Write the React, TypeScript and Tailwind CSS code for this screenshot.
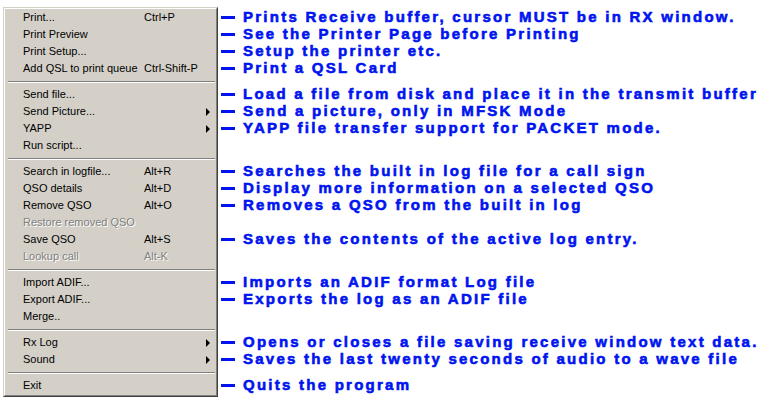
type Item = {
  label: string;
  shortcut?: string;
  arrow?: boolean;
  disabled?: boolean;
  note?: string;
};

const groups: Item[][] = [
  [
    { label: "Print...", shortcut: "Ctrl+P", note: "Prints Receive buffer, cursor MUST be in RX window." },
    { label: "Print Preview", note: "See the Printer Page before Printing" },
    { label: "Print Setup...", note: "Setup the printer etc." },
    { label: "Add QSL to print queue", shortcut: "Ctrl-Shift-P", note: "Print a QSL Card" },
  ],
  [
    { label: "Send file...", note: "Load a file from disk and place it in the transmit buffer" },
    { label: "Send Picture...", arrow: true, note: "Send a picture, only in MFSK Mode" },
    { label: "YAPP", arrow: true, note: "YAPP file transfer support for PACKET mode." },
    { label: "Run script..." },
  ],
  [
    { label: "Search in logfile...", shortcut: "Alt+R", note: "Searches the built in log file for a call sign" },
    { label: "QSO details", shortcut: "Alt+D", note: "Display more information on a selected QSO" },
    { label: "Remove QSO", shortcut: "Alt+O", note: "Removes a QSO from the built in log" },
    { label: "Restore removed QSO", disabled: true },
    { label: "Save QSO", shortcut: "Alt+S", note: "Saves the contents of the active log entry." },
    { label: "Lookup call", shortcut: "Alt-K", disabled: true },
  ],
  [
    { label: "Import ADIF...", note: "Imports an ADIF format Log file" },
    { label: "Export ADIF...", note: "Exports the log as an ADIF file" },
    { label: "Merge.." },
  ],
  [
    { label: "Rx Log", arrow: true, note: "Opens or closes a file saving receive window text data." },
    { label: "Sound", arrow: true, note: "Saves the last twenty seconds of audio to a wave file" },
  ],
  [{ label: "Exit", note: "Quits the program" }],
];

const Separator = () => (
  <div className="h-[9px] flex flex-col justify-center pl-[3px] pr-[1px]">
    <div className="h-px bg-[#808080]" />
    <div className="h-px bg-white" />
  </div>
);

const MenuRow = ({ item }: { item: Item }) => {
  const text = item.disabled
    ? "text-[#808080] [text-shadow:1px_1px_0_#ffffff]"
    : "text-black";
  return (
    <div className={`h-[17px] flex items-center pl-[18px] pr-[6px] ${text}`}>
      <span className="w-[121px] whitespace-nowrap">{item.label}</span>
      <span className="flex-1 whitespace-nowrap">{item.shortcut}</span>
      {item.arrow && (
        <span className="w-0 h-0 border-y-[4px] border-y-transparent border-l-[4px] border-l-black" />
      )}
    </div>
  );
};

const NoteRow = ({ item }: { item: Item }) => (
  <div className="h-[17px] flex items-center">
    {item.note && (
      <>
        <span className="ml-[3px] w-[14px] h-[3px] bg-[#0014f0]" />
        <span className="ml-[8px] whitespace-nowrap text-[15px] font-bold tracking-[2.25px] text-[#0014f0] [-webkit-text-stroke:0.6px_#0014f0]">
          {item.note}
        </span>
      </>
    )}
  </div>
);

export default function App() {
  return (
    <div className="w-[774px] h-[404px] bg-white overflow-hidden font-['Liberation_Sans',Arial,sans-serif] text-[11px]">
      <div className="flex pt-[7px] pl-[3px]">
        {/* the menu */}
        <div className="w-[215px] border border-t-[#d4d0c8] border-l-[#d4d0c8] border-r-[#404040] border-b-[#404040]">
          <div className="bg-[#d4d0c8] border border-t-white border-l-white border-r-[#808080] border-b-[#808080] pb-[1px]">
            {groups.map((group, gi) => (
              <div key={gi}>
                {gi > 0 && <Separator />}
                {group.map((item) => (
                  <MenuRow key={item.label} item={item} />
                ))}
              </div>
            ))}
          </div>
        </div>

        {/* blue notes */}
        <div className="pt-[2px]">
          {groups.map((group, gi) => (
            <div key={gi}>
              {gi > 0 && <div className="h-[9px]" />}
              {group.map((item) => (
                <NoteRow key={item.label} item={item} />
              ))}
            </div>
          ))}
        </div>
      </div>
    </div>
  );
}
